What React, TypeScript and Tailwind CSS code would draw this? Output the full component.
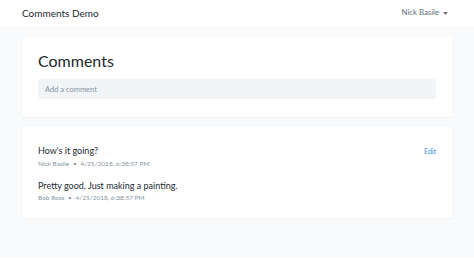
const comments = [
  { body: "How's it going?", author: "Nick Basile", date: "4/25/2018, 6:38:57 PM", editable: true },
  { body: "Pretty good. Just making a painting.", author: "Bob Ross", date: "4/25/2018, 6:38:57 PM", editable: false },
];

export default function App() {
  return (
    <div className="flex h-[260px] flex-col bg-white font-['Lato',sans-serif] text-[#22292f]">
      <header className="flex h-[26px] shrink-0 items-center justify-between bg-white pl-[22px] pr-[26px]">
        <span className="text-[10px]">Comments Demo</span>
        <span className="flex items-center gap-[4px] text-[7.8px] text-[#606f7b]">
          Nick Basile
          <svg width="5" height="3" viewBox="0 0 6 4" className="fill-[#606f7b]">
            <path d="M0 0h6L3 4z" />
          </svg>
        </span>
      </header>

      <main className="flex h-[231px] flex-col gap-[10px] bg-[#f8fafc] px-[22px] pt-[11px]">
        <section className="rounded-[3px] bg-white px-[16px] pt-[12px] pb-[18px] shadow-[0_1px_2px_rgba(0,0,0,0.04)]">
          <h1 className="text-[16px] leading-[24px]">Comments</h1>
          <input
            className="mt-[6px] block h-[20px] w-full rounded-[2px] bg-[#f1f5f8] px-[7px] text-[7.5px] outline-none placeholder:text-[#8795a1]"
            placeholder="Add a comment"
          />
        </section>

        <section className="flex flex-col gap-[11px] rounded-[3px] bg-white px-[16px] pt-[18px] pb-[15px] shadow-[0_1px_2px_rgba(0,0,0,0.04)]">
          {comments.map((c) => (
            <div key={c.body} className="flex items-start justify-between">
              <div>
                <p className="text-[9px] leading-[12px]">{c.body}</p>
                <p className="mt-[1.5px] text-[6.5px] leading-[10px] text-[#8795a1]">
                  {c.author} <span className="mx-[2px]">•</span> {c.date}
                </p>
              </div>
              {c.editable && <button className="mt-[1px] text-[7px] leading-[10px] text-[#3490dc]">Edit</button>}
            </div>
          ))}
        </section>
      </main>
    </div>
  );
}
